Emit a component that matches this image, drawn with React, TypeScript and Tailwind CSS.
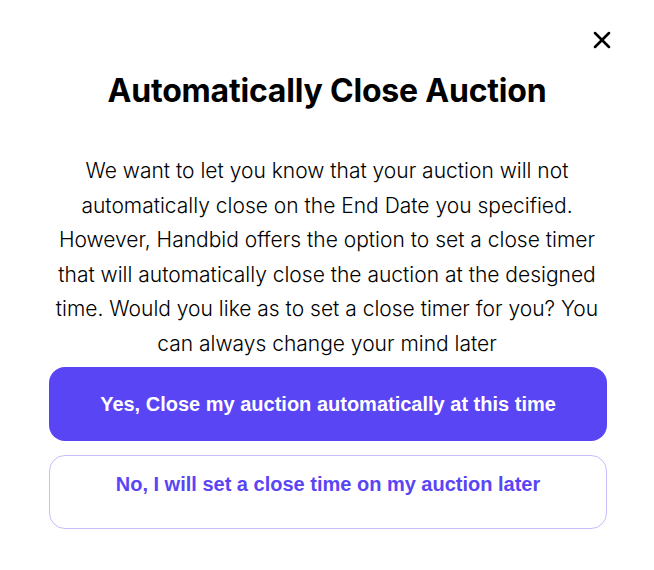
import { X } from "lucide-react";

export default function App() {
  return (
    <div className="h-[570px] w-[654px] bg-white font-['Inter',sans-serif] text-black">
      <div className="flex justify-end pr-[38px] pt-[26px]">
        <button className="flex h-[28px] w-[28px] items-center justify-center text-black">
          <X size={30} strokeWidth={2.2} />
        </button>
      </div>

      <h1 className="mt-[16px] text-center text-[32px] font-bold leading-[42px] tracking-[-0.2px]">
        Automatically Close Auction
      </h1>

      <p className="mx-auto mt-[42px] w-[566px] text-center text-[21px] font-light leading-[34.6px]">
        We want to let you know that your auction will not automatically close on the End Date you
        specified. However, Handbid offers the option to set a close timer that will automatically
        close the auction at the designed time. Would you like as to set a close timer for you? You
        can always change your mind later
      </p>

      <div className="ml-[49px] mr-[47px] mt-[5px] flex flex-col gap-[14px]">
        <button className="h-[74px] rounded-[16px] bg-[#5a45f5] font-['Liberation_Sans',sans-serif] text-[20px] font-bold text-white">
          Yes, Close my auction automatically at this time
        </button>
        <button className="h-[74px] rounded-[16px] border border-[#c6bdfb] bg-white pb-[16px] font-['Liberation_Sans',sans-serif] text-[20px] font-bold text-[#5a45f5]">
          No, I will set a close time on my auction later
        </button>
      </div>
    </div>
  );
}
